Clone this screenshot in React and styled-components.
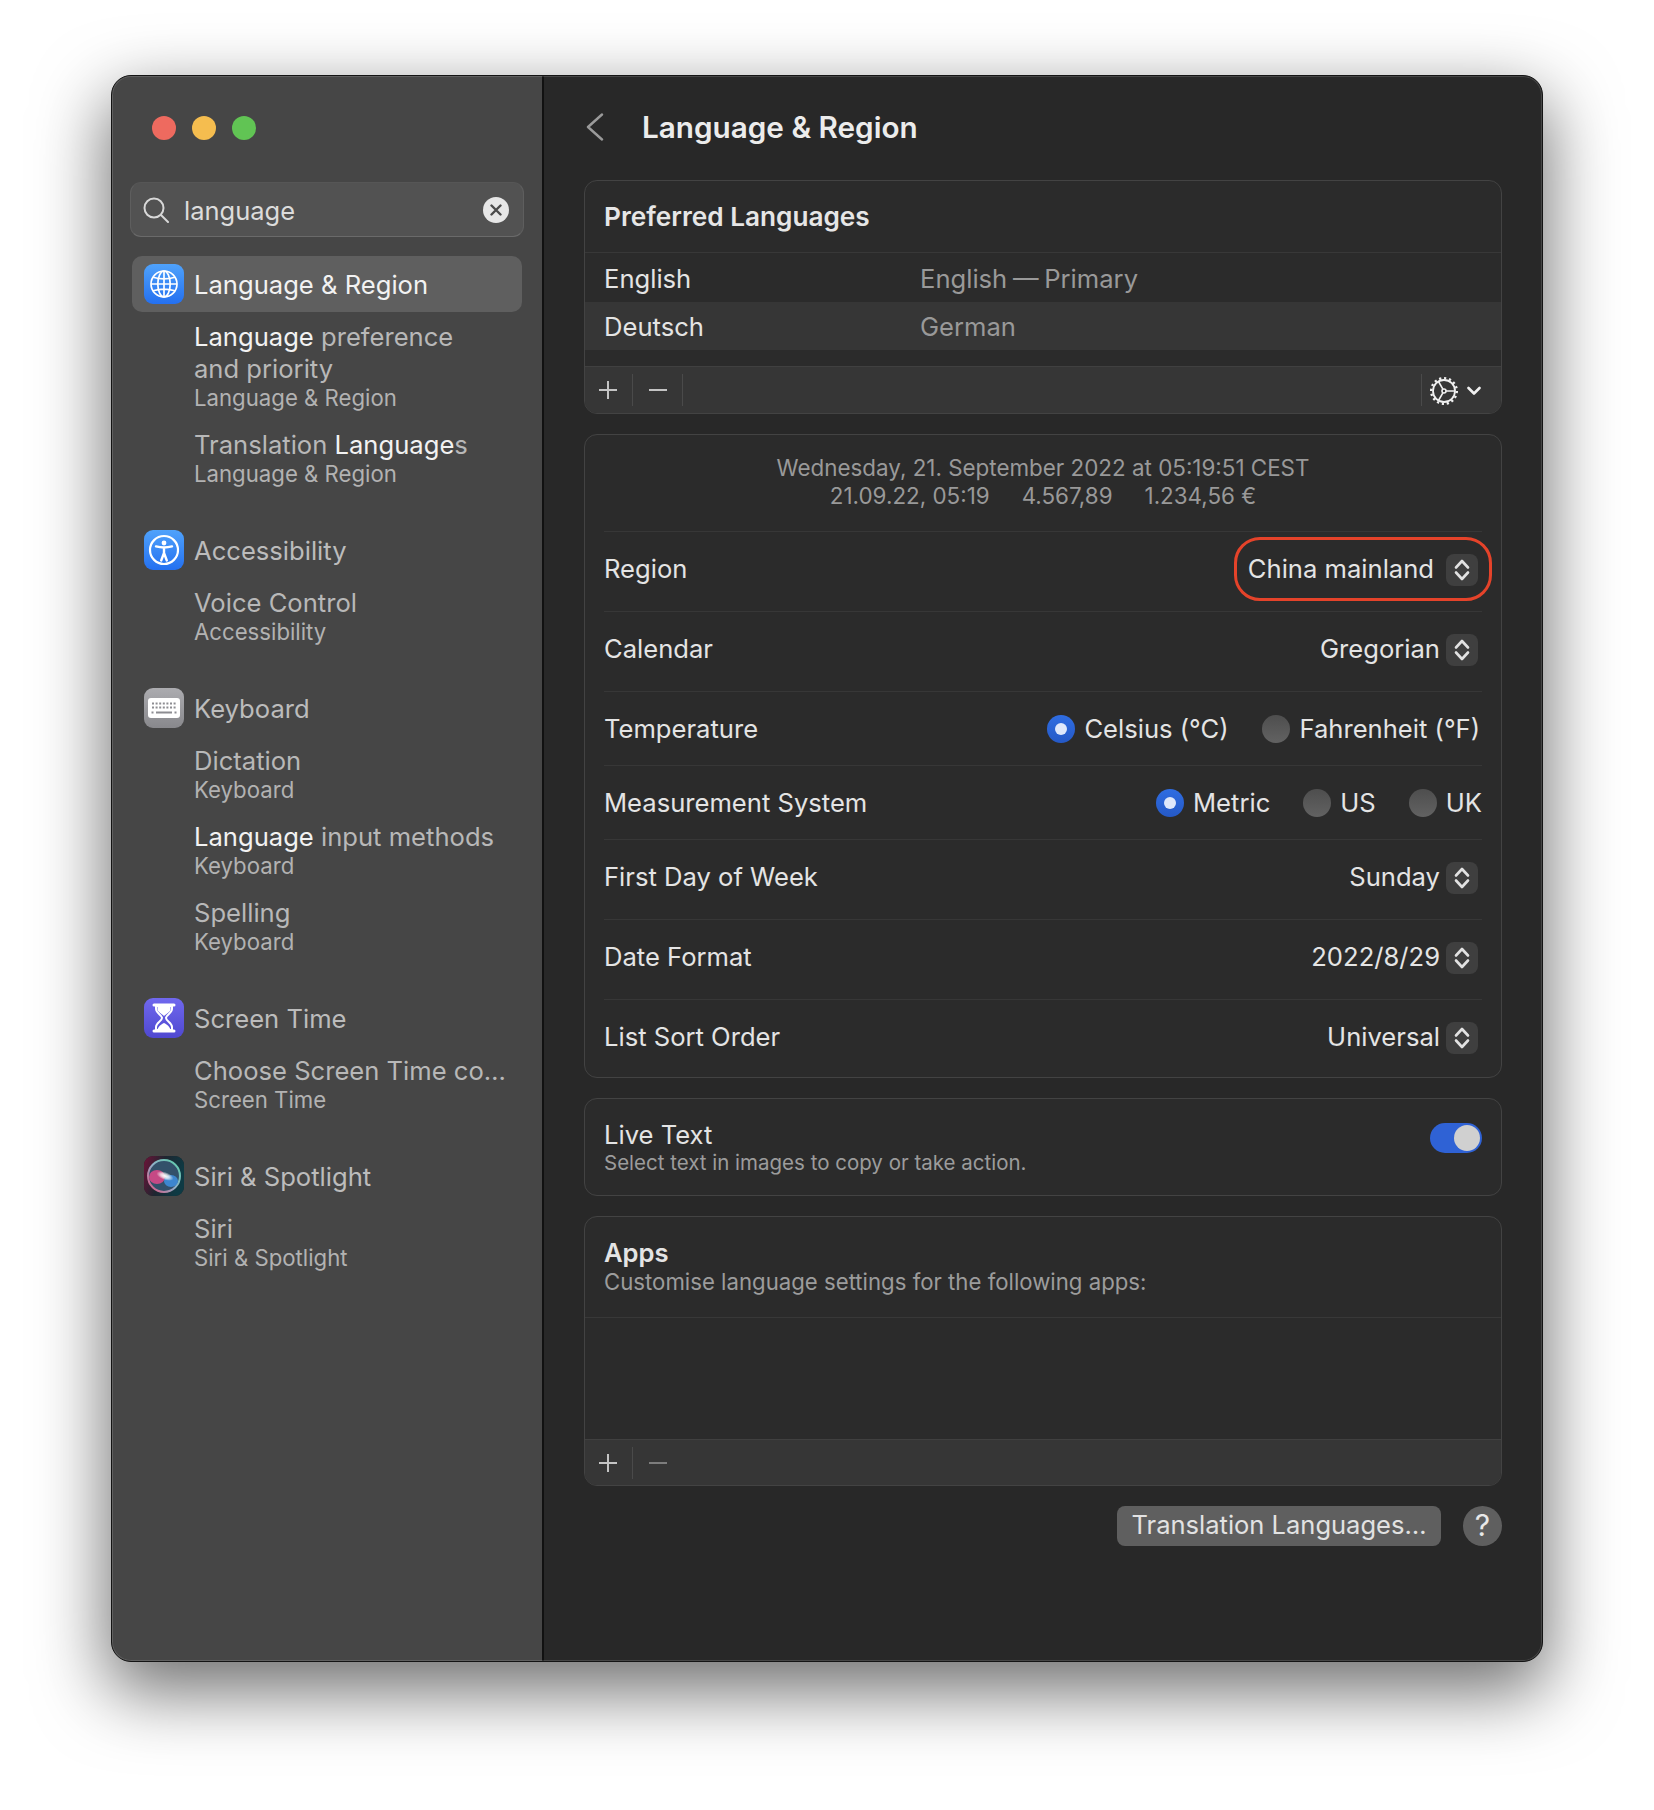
import React from "react";
import styled, { createGlobalStyle } from "styled-components";

const Global = createGlobalStyle`
  html, body { margin: 0; padding: 0; background: #fff; }
  * { box-sizing: border-box; }
  body { font-family: Inter, "Noto Sans", "Liberation Sans", sans-serif; -webkit-font-smoothing: antialiased; }
`;

const Page = styled.div`
  width: 1654px;
  height: 1810px;
  padding: 75px 0 0 111px;
  overflow: hidden;
`;

const Window = styled.div`
  width: 1432px;
  height: 1587px;
  display: flex;
  border: 1px solid #141414;
  border-radius: 20px;
  overflow: hidden;
  background: #282828;
  box-shadow: 0 26px 70px 4px rgba(0, 0, 0, 0.56);
  position: relative;
  &::after {
    content: "";
    position: absolute;
    inset: 0;
    border-radius: 19px;
    box-shadow: inset 0 0 0 1px rgba(255, 255, 255, 0.14);
    pointer-events: none;
  }
`;

const Sidebar = styled.aside`
  width: 432px;
  flex: none;
  background: #464646;
  border-right: 2px solid #111;
  padding-top: 40px;
`;

const Lights = styled.div`
  display: flex;
  gap: 16px;
  padding-left: 40px;
`;

const Light = styled.span`
  width: 24px;
  height: 24px;
  border-radius: 50%;
  background: ${(p) => p.$color};
`;

const Search = styled.div`
  margin: 42px 0 0 18px;
  width: 394px;
  height: 55px;
  display: flex;
  align-items: center;
  gap: 15px;
  padding: 0 14px 0 12px;
  border-radius: 11px;
  background: #525252;
  border: 1px solid #5e5e5e;
  border-top-color: #565656;
  border-bottom-color: #6a6a6a;
  color: #dcdcdc;
  font-size: 25.5px;
`;

const SearchText = styled.span`
  flex: 1;
  margin-top: 1px;
`;

const ClearButton = styled.span`
  width: 26px;
  height: 26px;
  border-radius: 50%;
  background: #e6e6e6;
  display: flex;
  align-items: center;
  justify-content: center;
`;

const SectionRow = styled.div`
  margin-left: 20px;
  width: 390px;
  height: ${(p) => (p.$selected ? "56px" : "40px")};
  margin-top: ${(p) => (p.$selected ? "19px" : "43px")};
  padding-left: 12px;
  display: flex;
  align-items: center;
  gap: 10px;
  border-radius: 10px;
  background: ${(p) => (p.$selected ? "#5f5f5f" : "transparent")};
  color: ${(p) => (p.$selected ? "#f2f2f2" : "#bcbcbc")};
  font-size: 25.6px;
`;

const IconTile = styled.span`
  width: 40px;
  height: 40px;
  flex: none;
  display: flex;
  align-items: center;
  justify-content: center;
  border-radius: 9px;
  overflow: hidden;
  background: ${(p) => p.$bg};
`;

const Results = styled.div`
  padding: ${(p) => (p.$selected ? "9px" : "17px")} 0 0 82px;
  display: flex;
  flex-direction: column;
  gap: 18px;
`;

const ResultTitle = styled.div`
  font-size: 25.6px;
  line-height: 32px;
  color: #b8b8b8;
  white-space: nowrap;
`;

const Hit = styled.span`
  color: #f2f2f2;
`;

const ResultSub = styled.div`
  font-size: 22.2px;
  line-height: 26px;
  color: #b2b2b2;
`;

const Main = styled.main`
  flex: 1;
  padding: 34px 40px 0 40px;
`;

const TitleBar = styled.header`
  height: 34px;
  display: flex;
  align-items: center;
  margin-bottom: 36px;
`;

const BackButton = styled.span`
  width: 58px;
  display: flex;
  padding-left: 2px;
`;

const Title = styled.h1`
  margin: 0;
  font-size: 29.7px;
  font-weight: 600;
  color: #ececec;
`;

const Stack = styled.div`
  display: flex;
  flex-direction: column;
  gap: 20px;
`;

const Card = styled.section`
  border: 1px solid #434343;
  border-radius: 13px;
  background: #2b2b2b;
  overflow: hidden;
`;

const CardHead = styled.div`
  height: 72px;
  padding: 0 0 1px 19px;
  display: flex;
  align-items: center;
  border-bottom: 1px solid #383838;
  font-size: 26.2px;
  font-weight: 600;
  color: #e6e6e6;
`;

const LangRow = styled.div`
  height: ${(p) => p.$h}px;
  padding-left: 19px;
  padding-top: ${(p) => (p.$alt ? "0" : "2px")};
  display: grid;
  grid-template-columns: 316px 1fr;
  align-items: center;
  background: ${(p) => (p.$alt ? "#363636" : "transparent")};
  font-size: 25.6px;
  color: #e4e4e4;
`;

const LangNative = styled.span`
  color: #999;
  word-spacing: -1.5px;
`;

const Filler = styled.div`
  height: ${(p) => p.$h}px;
`;

const CardFoot = styled.div`
  height: ${(p) => p.$h}px;
  display: flex;
  align-items: center;
  background: #363636;
  border-top: 1px solid #404040;
`;

const FootButton = styled.span`
  width: ${(p) => (p.$first ? "48px" : "50px")};
  height: 32px;
  padding-right: ${(p) => (p.$first ? "2px" : "0")};
  display: flex;
  align-items: center;
  justify-content: center;
  border-right: ${(p) => (p.$plain ? "none" : "1px solid #4a4a4a")};
  opacity: ${(p) => (p.$dim ? 0.5 : 1)};
`;

const GearMenu = styled.span`
  margin-left: auto;
  width: 80px;
  height: 32px;
  display: flex;
  align-items: center;
  gap: 8px;
  padding: 2px 0 0 7px;
  border-left: 1px solid #4a4a4a;
`;

const Preview = styled.div`
  height: 96px;
  padding-top: 19px;
  text-align: center;
  font-size: 22.4px;
  line-height: 28px;
  color: #999;
`;

const PreviewGap = styled.span`
  display: inline-block;
  width: 32px;
`;

const SettingsList = styled.div`
  padding: 0 19px 0 19px;
`;

const SettingRow = styled.div`
  height: ${(p) => p.$h}px;
  padding-bottom: ${(p) => p.$pad}px;
  display: flex;
  align-items: center;
  justify-content: space-between;
  border-top: 1px solid #373737;
  font-size: 25.6px;
  color: #e4e4e4;
`;

const Label = styled.span`
  margin-bottom: ${(p) => (p.$raised ? "2px" : "0")};
`;

const Picker = styled.span`
  position: relative;
  display: flex;
  align-items: center;
  gap: ${(p) => (p.$circled ? "12px" : "6px")};
  margin-right: 4px;
  &::after {
    content: ${(p) => (p.$circled ? '""' : "none")};
    position: absolute;
    top: -16px;
    bottom: -15px;
    left: -14px;
    right: -14px;
    border: 3px solid #e5432a;
    border-radius: 26px;
  }
`;

const Stepper = styled.span`
  width: 32px;
  height: 32px;
  border-radius: 8px;
  background: #3f3f3f;
  display: flex;
  align-items: center;
  justify-content: center;
`;

const RadioGroup = styled.div`
  display: flex;
  gap: ${(p) => p.$gap}px;
  margin-right: ${(p) => p.$right}px;
`;

const RadioOption = styled.label`
  display: flex;
  align-items: center;
  gap: 9px;
`;

const RadioDot = styled.span`
  width: 28px;
  height: 28px;
  border-radius: 50%;
  display: flex;
  align-items: center;
  justify-content: center;
  background: ${(p) => (p.$on ? "linear-gradient(#2f6de2, #2559c6)" : "linear-gradient(#4e4e4e, #626262)")};
  &::after {
    content: ${(p) => (p.$on ? '""' : "none")};
    width: 12px;
    height: 12px;
    border-radius: 50%;
    background: #dfe8fb;
  }
`;

const LiveBody = styled.div`
  height: 96px;
  padding: 20px 19px 0;
  display: flex;
  justify-content: space-between;
  align-items: flex-start;
`;

const CardTitle = styled.div`
  font-size: 25.6px;
  line-height: 32px;
  font-weight: ${(p) => (p.$bold ? 600 : 400)};
  color: #e4e4e4;
`;

const CardHint = styled.div`
  font-size: ${(p) => p.$size}px;
  line-height: 26px;
  margin-top: ${(p) => p.$lift || 0}px;
  color: #9c9c9c;
`;

const Toggle = styled.span`
  width: 52px;
  height: 30px;
  margin-top: 4px;
  border-radius: 15px;
  background: #2f62d5;
  padding: 2px;
  display: flex;
  justify-content: flex-end;
  &::after {
    content: "";
    width: 26px;
    height: 26px;
    border-radius: 50%;
    background: #d0d0d0;
  }
`;

const AppsHead = styled.div`
  height: 101px;
  padding: 20px 19px 0;
  border-bottom: 1px solid #383838;
`;

const AppsBody = styled.div`
  height: 121px;
`;

const Actions = styled.div`
  display: flex;
  justify-content: flex-end;
  align-items: center;
  gap: 22px;
`;

const Button = styled.button`
  width: 324px;
  height: 40px;
  padding: 0 0 3px;
  border: none;
  border-radius: 8px;
  background: #5f5f5f;
  color: #e2e2e2;
  font: inherit;
  font-size: 25.5px;
`;

const HelpButton = styled.button`
  width: 39px;
  height: 40px;
  padding: 0 0 2px;
  border: none;
  border-radius: 50%;
  background: #5f5f5f;
  color: #e8e8e8;
  font: inherit;
  font-size: 30px;
  font-weight: 400;
`;

const Chevrons = () => (
  <svg width="18" height="26" viewBox="0 0 18 26" fill="none" stroke="#e2e2e2" strokeWidth="2.6" strokeLinecap="round" strokeLinejoin="round">
    <path d="M3 10.5 9 4l6 6.5" />
    <path d="M3 15.5 9 22l6-6.5" />
  </svg>
);

const Plus = () => (
  <svg width="20" height="20" viewBox="0 0 20 20" stroke="#c4c4c4" strokeWidth="2">
    <path d="M10 1v18M1 10h18" />
  </svg>
);

const Minus = () => (
  <svg width="20" height="20" viewBox="0 0 20 20" stroke="#c4c4c4" strokeWidth="2">
    <path d="M1 10h18" />
  </svg>
);

const Gear = () => (
  <svg width="30" height="30" viewBox="0 0 30 30" fill="none" stroke="#f0f0f0">
    <circle cx="15" cy="15" r="11" strokeWidth="1.8" />
    <circle cx="15" cy="15" r="12.8" strokeWidth="2.4" strokeDasharray="2.2 2.8" />
    <circle cx="15" cy="15" r="2" strokeWidth="1.6" />
    <path d="M17 15h9M14 16.7 9.5 24.5M14 13.3 9.5 5.5" strokeWidth="1.6" />
  </svg>
);

const Globe = () => (
  <svg width="30" height="30" viewBox="0 0 30 30" fill="none" stroke="#fff" strokeWidth="1.7">
    <circle cx="15" cy="15" r="13" />
    <ellipse cx="15" cy="15" rx="6.2" ry="13" />
    <path d="M15 2v26M2 15h26M4 8.2c6.5 2 15.5 2 22 0M4 21.8c6.5-2 15.5-2 22 0" />
  </svg>
);

const Person = () => (
  <svg width="32" height="32" viewBox="0 0 32 32" fill="none">
    <circle cx="16" cy="16" r="14" stroke="#fff" strokeWidth="2.2" />
    <circle cx="16" cy="9" r="2.4" fill="#fff" />
    <path d="M8 12.4c5 1.4 11 1.4 16 0M16 13.5v6M16 19l-2.8 7.5M16 19l2.8 7.5" stroke="#fff" strokeWidth="2.4" strokeLinecap="round" />
  </svg>
);

const KeyboardGlyph = () => (
  <svg width="32" height="20" viewBox="0 0 32 20">
    <rect width="32" height="20" rx="3" fill="#fff" />
    <path d="M4 5.5h24M4 9.5h24" stroke="#8d8d92" strokeWidth="2.2" strokeDasharray="2 1.6" />
    <path d="M3.5 14.5h2M8 14.5h16M26.5 14.5h2" stroke="#8d8d92" strokeWidth="2.2" />
  </svg>
);

const Hourglass = () => (
  <svg width="24" height="30" viewBox="0 0 24 30" fill="none">
    <path d="M2 2h20" stroke="#fff" strokeWidth="3" strokeLinecap="round" />
    <path d="M2 28h20" stroke="#fff" strokeWidth="3" strokeLinecap="round" />
    <path d="M4 3v3c0 4 6 6 6 9s-6 5-6 9v3h16v-3c0-4-6-6-6-9s6-5 6-9V3z" stroke="#fff" strokeWidth="2" fill="none" />
    <path d="M5.5 4h13v2.5c0 2-3.5 4-6.5 6.5-3-2.5-6.5-4.5-6.5-6.5zM12 20c3 1.5 6 3.5 6.5 7h-13c.5-3.5 3.5-5.5 6.5-7z" fill="#fff" />
  </svg>
);

const SiriOrb = () => (
  <svg width="40" height="40" viewBox="0 0 40 40">
    <defs>
      <linearGradient id="siriBg" x1="0" y1="0" x2="1" y2="0.3">
        <stop offset="0" stopColor="#6e1238" />
        <stop offset="0.5" stopColor="#1e2630" />
        <stop offset="1" stopColor="#0e3a44" />
      </linearGradient>
      <linearGradient id="siriRing" x1="0" y1="1" x2="1" y2="0">
        <stop offset="0" stopColor="#e0527f" />
        <stop offset="0.5" stopColor="#8fb0c8" />
        <stop offset="1" stopColor="#58d0a8" />
      </linearGradient>
      <radialGradient id="siriCore">
        <stop offset="0" stopColor="#fff" />
        <stop offset="0.5" stopColor="#ffffff" stopOpacity="0.7" />
        <stop offset="1" stopColor="#ffffff" stopOpacity="0" />
      </radialGradient>
    </defs>
    <rect width="40" height="40" fill="url(#siriBg)" />
    <circle cx="20" cy="20" r="16" fill="#33506a" stroke="url(#siriRing)" strokeWidth="2" />
    <ellipse cx="13" cy="21" rx="8" ry="7" fill="#e0488a" opacity="0.85" />
    <ellipse cx="27" cy="25" rx="7" ry="6" fill="#3f8fe0" opacity="0.85" />
    <ellipse cx="21" cy="20" rx="9" ry="4" fill="url(#siriCore)" transform="rotate(20 21 20)" />
  </svg>
);

const SECTIONS = [
  {
    name: "Language & Region",
    selected: true,
    tile: "linear-gradient(#4fa2fb, #2470f0)",
    icon: <Globe />,
    results: [
      { title: <><Hit>Language</Hit> preference<br />and priority</>, sub: "Language & Region" },
      { title: <>Translation <Hit>Language</Hit>s</>, sub: "Language & Region" },
    ],
  },
  {
    name: "Accessibility",
    tile: "linear-gradient(#4fa2fb, #2470f0)",
    icon: <Person />,
    results: [{ title: "Voice Control", sub: "Accessibility" }],
  },
  {
    name: "Keyboard",
    tile: "linear-gradient(#acacb0, #88888c)",
    icon: <KeyboardGlyph />,
    results: [
      { title: "Dictation", sub: "Keyboard" },
      { title: <><Hit>Language</Hit> input methods</>, sub: "Keyboard" },
      { title: "Spelling", sub: "Keyboard" },
    ],
  },
  {
    name: "Screen Time",
    tile: "linear-gradient(#7068ee, #4f48d0)",
    icon: <Hourglass />,
    results: [{ title: "Choose Screen Time co…", sub: "Screen Time" }],
  },
  {
    name: "Siri & Spotlight",
    tile: "#222",
    icon: <SiriOrb />,
    results: [{ title: "Siri", sub: "Siri & Spotlight" }],
  },
];

function SidebarSection({ section }) {
  return (
    <>
      <SectionRow $selected={section.selected}>
        <IconTile $bg={section.tile}>{section.icon}</IconTile>
        {section.name}
      </SectionRow>
      <Results $selected={section.selected}>
        {section.results.map((r, i) => (
          <div key={i}>
            <ResultTitle>{r.title}</ResultTitle>
            <ResultSub>{r.sub}</ResultSub>
          </div>
        ))}
      </Results>
    </>
  );
}

function PickerRow({ label, value, circled, h = 80, pad = 4 }) {
  return (
    <SettingRow $h={h} $pad={pad}>
      <Label $raised>{label}</Label>
      <Picker $circled={circled}>
        <Label $raised>{value}</Label>
        <Stepper>
          <Chevrons />
        </Stepper>
      </Picker>
    </SettingRow>
  );
}

function RadioRow({ label, options, gap, right }) {
  return (
    <SettingRow $h={74} $pad={0}>
      <Label>{label}</Label>
      <RadioGroup $gap={gap} $right={right}>
        {options.map((o, i) => (
          <RadioOption key={o}>
            <RadioDot $on={i === 0} />
            {o}
          </RadioOption>
        ))}
      </RadioGroup>
    </SettingRow>
  );
}

export default function App() {
  return (
    <Page>
      <Global />
      <Window>
        <Sidebar>
          <Lights>
            <Light $color="#ee6a5f" />
            <Light $color="#f5bd4f" />
            <Light $color="#61c454" />
          </Lights>
          <Search>
            <svg width="26" height="26" viewBox="0 0 26 26" fill="none" stroke="#d8d8d8" strokeWidth="2" strokeLinecap="round">
              <circle cx="11" cy="11" r="9.5" />
              <path d="M18 18l7 7" />
            </svg>
            <SearchText>language</SearchText>
            <ClearButton>
              <svg width="12" height="12" viewBox="0 0 12 12" stroke="#4a4a4a" strokeWidth="2.4" strokeLinecap="round">
                <path d="M1.5 1.5l9 9M10.5 1.5l-9 9" />
              </svg>
            </ClearButton>
          </Search>
          {SECTIONS.map((s) => (
            <SidebarSection key={s.name} section={s} />
          ))}
        </Sidebar>
        <Main>
          <TitleBar>
            <BackButton>
              <svg width="18" height="28" viewBox="0 0 18 28" fill="none" stroke="#9a9a9a" strokeWidth="2.4" strokeLinecap="round" strokeLinejoin="round">
                <path d="M16 1.5 2 14l14 12.5" />
              </svg>
            </BackButton>
            <Title>Language &amp; Region</Title>
          </TitleBar>
          <Stack>
            <Card>
              <CardHead>Preferred Languages</CardHead>
              <LangRow $h={49}>
                English
                <LangNative>English — Primary</LangNative>
              </LangRow>
              <LangRow $h={48} $alt>
                Deutsch
                <LangNative>German</LangNative>
              </LangRow>
              <Filler $h={16} />
              <CardFoot $h={47}>
                <FootButton $first><Plus /></FootButton>
                <FootButton><Minus /></FootButton>
                <GearMenu>
                  <Gear />
                  <svg width="14" height="10" viewBox="0 0 14 10" fill="none" stroke="#f0f0f0" strokeWidth="2.6" strokeLinecap="round" strokeLinejoin="round">
                    <path d="M1.5 2 7 7.5 12.5 2" />
                  </svg>
                </GearMenu>
              </CardFoot>
            </Card>

            <Card>
              <Preview>
                Wednesday, 21. September 2022 at 05:19:51 CEST
                <br />
                21.09.22, 05:19<PreviewGap />4.567,89<PreviewGap />1.234,56 €
              </Preview>
              <SettingsList>
                <PickerRow label="Region" value="China mainland" circled />
                <PickerRow label="Calendar" value="Gregorian" />
                <RadioRow label="Temperature" options={["Celsius (°C)", "Fahrenheit (°F)"]} gap={34} right={2} />
                <RadioRow label="Measurement System" options={["Metric", "US", "UK"]} gap={33} right={0} />
                <PickerRow label="First Day of Week" value="Sunday" />
                <PickerRow label="Date Format" value="2022/8/29" />
                <PickerRow label="List Sort Order" value="Universal" h={78} pad={2} />
              </SettingsList>
            </Card>

            <Card>
              <LiveBody>
                <div>
                  <CardTitle>Live Text</CardTitle>
                  <CardHint $size={20.5} $lift={-1}>Select text in images to copy or take action.</CardHint>
                </div>
                <Toggle />
              </LiveBody>
            </Card>

            <Card>
              <AppsHead>
                <CardTitle $bold>Apps</CardTitle>
                <CardHint $size={22.2}>Customise language settings for the following apps:</CardHint>
              </AppsHead>
              <AppsBody />
              <CardFoot $h={46}>
                <FootButton $first><Plus /></FootButton>
                <FootButton $plain $dim><Minus /></FootButton>
              </CardFoot>
            </Card>

            <Actions>
              <Button>Translation Languages…</Button>
              <HelpButton>?</HelpButton>
            </Actions>
          </Stack>
        </Main>
      </Window>
    </Page>
  );
}
